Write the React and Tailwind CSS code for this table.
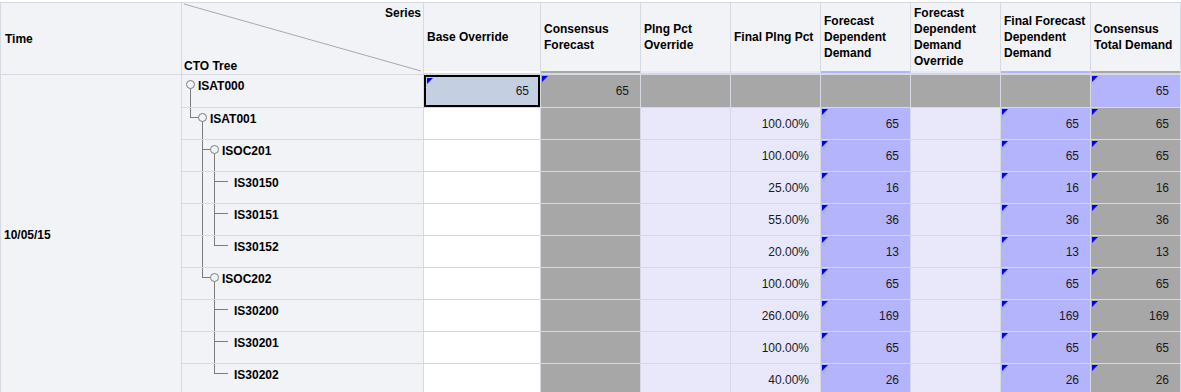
const LINE = '#7c7c7c';

const columns = [
  { label: 'Base Override', strip: 'bg-white' },
  { label: 'Consensus Forecast', strip: 'bg-[#a7a7a7]' },
  { label: 'Plng Pct Override', strip: 'bg-[#e8e8fa]' },
  { label: 'Final Plng Pct', strip: 'bg-[#e8e8fa]' },
  { label: 'Forecast Dependent Demand', strip: 'bg-[#b4b4fd]' },
  { label: 'Forecast Dependent Demand Override', strip: 'bg-[#e8e8fa]' },
  { label: 'Final Forecast Dependent Demand', strip: 'bg-[#b4b4fd]' },
  { label: 'Consensus Total Demand', strip: 'bg-[#a7a7a7]' },
];

const bg = {
  white: 'bg-white',
  gray: 'bg-[#a7a7a7]',
  lav: 'bg-[#e8e8fa]',
  peri: 'bg-[#b4b4fd]',
  sel: 'bg-[#c4cfe1] border-2 border-black',
};

// tree: depth, leaf, last, kids, pass (full height verticals)
const rows = [
  { name: 'ISAT000', depth: 0, kids: true, root: true },
  { name: 'ISAT001', depth: 1, last: true, kids: true, pct: '100.00%', v: 65 },
  { name: 'ISOC201', depth: 2, kids: true, pct: '100.00%', v: 65 },
  { name: 'IS30150', depth: 3, leaf: true, pass: [20], pct: '25.00%', v: 16 },
  { name: 'IS30151', depth: 3, leaf: true, pass: [20], pct: '55.00%', v: 36 },
  { name: 'IS30152', depth: 3, leaf: true, last: true, pass: [20], pct: '20.00%', v: 13 },
  { name: 'ISOC202', depth: 2, last: true, kids: true, pct: '100.00%', v: 65 },
  { name: 'IS30200', depth: 3, leaf: true, pct: '260.00%', v: 169 },
  { name: 'IS30201', depth: 3, leaf: true, pct: '100.00%', v: 65 },
  { name: 'IS30202', depth: 3, leaf: true, last: true, pct: '40.00%', v: 26 },
];

function Marker() {
  return (
    <svg className="absolute top-px left-px" width="6" height="6" viewBox="0 0 6 6">
      <polygon points="0,0 6,0 0,6" fill="#0000f5" />
    </svg>
  );
}

function TreeGlyph({ row }) {
  const cy = 9;
  const cx = 8 + 12 * row.depth;
  const px = 8 + 12 * (row.depth - 1);
  const labelX = row.leaf ? 52 : cx + 8;
  return (
    <svg width={labelX} height="32" className="shrink-0">
      {(row.pass || []).map((x) => (
        <line key={x} x1={x + 0.5} y1="0" x2={x + 0.5} y2="32" stroke={LINE} />
      ))}
      {!row.root && (
        <>
          <line x1={px + 0.5} y1="0" x2={px + 0.5} y2={row.last ? cy + 0.5 : 32} stroke={LINE} />
          <line x1={px} y1={cy + 0.5} x2={row.leaf ? px + 14 : cx - 4} y2={cy + 0.5} stroke={LINE} />
        </>
      )}
      {!row.leaf && <circle cx={cx + 0.5} cy={cy + 0.5} r="4" fill="none" stroke={LINE} />}
      {row.kids && <line x1={cx + 0.5} y1={cy + 4.5} x2={cx + 0.5} y2="32" stroke={LINE} />}
    </svg>
  );
}

function Cell({ kind, value, mark }) {
  return (
    <div className={`relative flex items-center justify-end text-xs leading-4 text-[#1a1a1a] ${kind === 'sel' ? 'pr-[9px]' : 'pr-[11px]'} ${bg[kind]}`}>
      {mark && <Marker />}
      {value}
    </div>
  );
}

export default function App() {
  return (
    <div className="w-[1181px] h-[392px] overflow-hidden bg-white pt-[2px] font-['Liberation_Sans',Arial,sans-serif] text-black">
      <div className="grid grid-cols-[180px_241px_116px_99px_repeat(6,89px)] grid-rows-[71px_32px_repeat(9,31px)] gap-px p-px bg-[#d5dae2]">
        {/* Header */}
        <div className="flex items-center pl-1 bg-[#f1f3f7] text-xs leading-4 font-bold">Time</div>
        <div className="relative flex flex-col justify-between bg-[#f1f3f7] text-xs leading-4 font-bold">
          <svg className="absolute inset-0" width="241" height="71">
            <line x1="2" y1="1" x2="239" y2="68" stroke="#a9a9a9" />
          </svg>
          <div className="relative text-right pr-[2px] pt-[2px]">Series</div>
          <div className="relative pl-[2px]">CTO Tree</div>
        </div>
        {columns.map((c) => (
          <div key={c.label} className="flex flex-col bg-[#f1f3f7]">
            <div className="flex-1 flex items-center px-[3px] text-xs leading-4 font-bold">{c.label}</div>
            <div className={`h-[2px] ${c.strip}`} />
            <div className="h-px bg-[#d5dae2]" />
          </div>
        ))}

        {/* Time */}
        <div className="row-span-10 flex items-center pl-[3px] bg-[#f1f3f7] text-xs leading-4 font-bold">10/05/15</div>

        {rows.map((r) =>
          r.root ? (
            <Row key={r.name} r={r}>
              <Cell kind="sel" value="65" mark />
              <Cell kind="gray" value="65" mark />
              <Cell kind="gray" />
              <Cell kind="gray" />
              <Cell kind="gray" />
              <Cell kind="gray" />
              <Cell kind="gray" />
              <Cell kind="peri" value="65" mark />
            </Row>
          ) : (
            <Row key={r.name} r={r}>
              <Cell kind="white" />
              <Cell kind="gray" />
              <Cell kind="lav" />
              <Cell kind="lav" value={r.pct} />
              <Cell kind="peri" value={r.v} mark />
              <Cell kind="lav" />
              <Cell kind="peri" value={r.v} mark />
              <Cell kind="gray" value={r.v} mark />
            </Row>
          )
        )}
      </div>
    </div>
  );
}

function Row({ r, children }) {
  return (
    <>
      <div className="flex items-start overflow-hidden bg-[#f1f3f7]">
        <TreeGlyph row={r} />
        <span className="pt-[3px] text-xs leading-4 font-bold">{r.name}</span>
      </div>
      {children}
    </>
  );
}
